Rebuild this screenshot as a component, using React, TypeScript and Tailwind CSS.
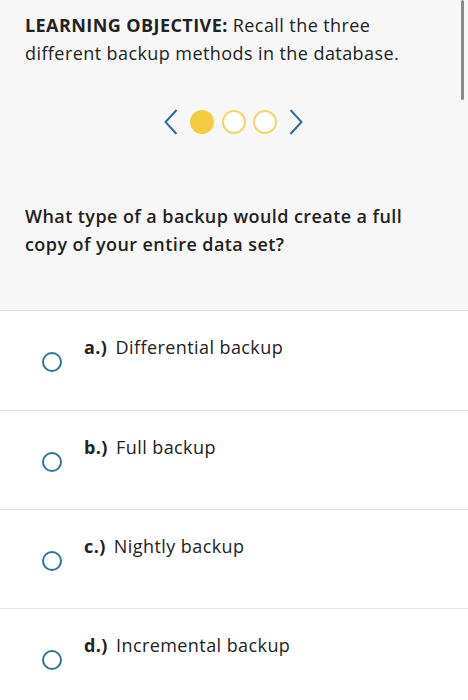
import React from "react";

const options = [
  { k: "a.)", t: "Differential backup" },
  { k: "b.)", t: "Full backup" },
  { k: "c.)", t: "Nightly backup" },
  { k: "d.)", t: "Incremental backup" },
];

export default function App() {
  return (
    <div
      className="relative w-[468px] h-[700px] overflow-hidden bg-white text-[#222222] tracking-[0.42px]"
      style={{ fontFamily: "'Open Sans', Lato, sans-serif" }}
    >
      <div className="absolute right-[4px] top-0 w-[3px] h-[100px] rounded-full bg-[#8a8a8a]" />
      <div className="bg-[#f7f7f7] px-[25px] pt-[11px] pb-[52px] border-b border-[#e3e3e3]">
        <p className="text-[18px] leading-[28px] pr-[30px]">
          <span className="font-bold">LEARNING OBJECTIVE:</span> Recall the three different backup methods in the database.
        </p>
        <div className="flex items-center justify-center mt-[42px] h-[26px] pr-[2px]">
          <svg width="14" height="26" viewBox="0 0 14 26" className="mr-[12px]">
            <polyline points="12.5,1 1.5,13 12.5,25" fill="none" stroke="#2d6d9e" strokeWidth="2" />
          </svg>
          <div className="w-[24px] h-[24px] rounded-full bg-[#f4cb3c]" />
          <div className="w-[24px] h-[24px] rounded-full bg-white border-[2.5px] border-[#f0d570] ml-[8px]" />
          <div className="w-[24px] h-[24px] rounded-full bg-white border-[2.5px] border-[#f0d570] ml-[7px]" />
          <svg width="14" height="26" viewBox="0 0 14 26" className="ml-[12px]">
            <polyline points="1.5,1 12.5,13 1.5,25" fill="none" stroke="#2d6d9e" strokeWidth="2" />
          </svg>
        </div>
        <p className="mt-[67px] text-[18px] leading-[28px] font-semibold pr-[10px]">
          What type of a backup would create a full copy of your entire data set?
        </p>
      </div>
      {options.map((o, i) => (
        <div
          key={o.k}
          className={`flex pl-[42px] h-[99px] ${i > 0 ? "border-t border-[#e3e3e3]" : ""}`}
        >
          <div className="mt-[41px] w-[20px] h-[20px] rounded-full border-[2.5px] border-[#2f7596] shrink-0" />
          <p className="ml-[22px] pt-[22px] text-[18px] leading-[28px]">
            <span className="font-bold mr-[3px]">{o.k}</span> {o.t}
          </p>
        </div>
      ))}
    </div>
  );
}
